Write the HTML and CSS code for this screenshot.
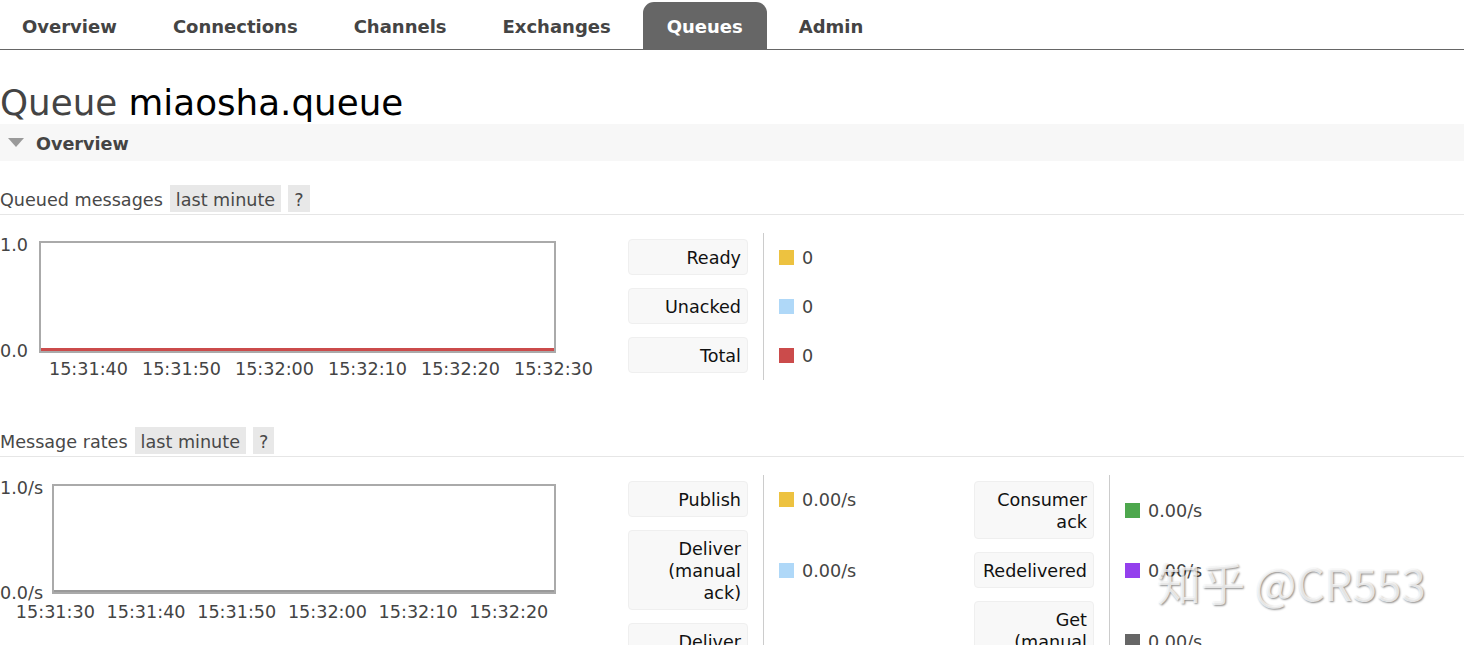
FILE: index.html
```html
<!DOCTYPE html>
<html lang="en">
<head>
<meta charset="utf-8">
<title>RabbitMQ Management - Queue miaosha.queue</title>
<link rel="stylesheet" href="styles.css">
</head>
<body>
<nav class="tabs">
  <a class="tab first">Overview</a>
  <a class="tab">Connections</a>
  <a class="tab">Channels</a>
  <a class="tab">Exchanges</a>
  <a class="tab active">Queues</a>
  <a class="tab">Admin</a>
</nav>

<h1 class="title"><span class="title-kind">Queue</span> <span class="title-name">miaosha.queue</span></h1>

<div class="section-bar">
  <span class="tri"></span>
  <span class="section-name">Overview</span>
</div>

<div class="section">
  <h3 class="sub"><span>Queued messages</span><span class="pill">last minute</span><span class="pill">?</span></h3>
  <div class="chart-row">
    <div class="chart-block">
      <div class="plot-wrap">
        <div class="yaxis y1"><span>1.0</span><span>0.0</span></div>
        <div class="plot p1"><div class="series red"></div></div>
      </div>
      <div class="xaxis x1">
        <span>15:31:40</span><span>15:31:50</span><span>15:32:00</span><span>15:32:10</span><span>15:32:20</span><span>15:32:30</span>
      </div>
    </div>
    <div class="stats first-stats">
      <div class="lbl"><div class="box">Ready</div></div>
      <div class="val"><i class="sw c-yellow"></i>0</div>
      <div class="lbl"><div class="box">Unacked</div></div>
      <div class="val"><i class="sw c-blue"></i>0</div>
      <div class="lbl"><div class="box">Total</div></div>
      <div class="val"><i class="sw c-red"></i>0</div>
    </div>
  </div>

  <h3 class="sub rates"><span>Message rates</span><span class="pill">last minute</span><span class="pill">?</span></h3>
  <div class="chart-row rates-row">
    <div class="chart-block">
      <div class="plot-wrap pw2">
        <div class="yaxis y2"><span>1.0/s</span><span>0.0/s</span></div>
        <div class="plot p2"><div class="series gray"></div></div>
      </div>
      <div class="xaxis x2">
        <span>15:31:30</span><span>15:31:40</span><span>15:31:50</span><span>15:32:00</span><span>15:32:10</span><span>15:32:20</span>
      </div>
    </div>
    <div class="stats first-stats">
      <div class="lbl"><div class="box">Publish</div></div>
      <div class="val"><i class="sw c-yellow"></i>0.00/s</div>
      <div class="lbl"><div class="box">Deliver (manual ack)</div></div>
      <div class="val"><i class="sw c-blue"></i>0.00/s</div>
      <div class="lbl"><div class="box">Deliver (auto ack)</div></div>
      <div class="val"><i class="sw c-red"></i>0.00/s</div>
    </div>
    <div class="stats">
      <div class="lbl"><div class="box">Consumer ack</div></div>
      <div class="val"><i class="sw c-green"></i>0.00/s</div>
      <div class="lbl"><div class="box">Redelivered</div></div>
      <div class="val"><i class="sw c-purple"></i>0.00/s</div>
      <div class="lbl"><div class="box">Get (manual ack)</div></div>
      <div class="val"><i class="sw c-dark"></i>0.00/s</div>
      <div class="lbl"><div class="box">Get (auto ack)</div></div>
      <div class="val"><i class="sw c-olive"></i>0.00/s</div>
    </div>
  </div>
</div>

<div class="watermark">知乎 @CR553</div>
</body>
</html>
```

FILE: styles.css
```css
html, body {
  margin: 0;
  padding: 0;
  background: #fff;
}
body {
  font-family: "DejaVu Sans", Verdana, sans-serif;
  font-size: 17.6px;
  color: #484848;
  overflow: hidden;
  position: relative;
  min-height: 645px;
}

/* nav */
.tabs {
  display: flex;
  align-items: flex-end;
  height: 49px;
  border-bottom: 1px solid #666;
}
.tab {
  display: block;
  height: 47px;
  line-height: 49px;
  padding: 0 24px;
  margin-right: 8px;
  font-weight: bold;
  font-size: 18px;
  color: #444;
  border-radius: 11px 11px 0 0;
}
.tab.first { margin-left: -2px; }
.tab.active {
  background: #666;
  color: #fff;
}

/* title */
.title {
  margin: 0;
  padding-top: 32px;
  font-size: 35.7px;
  line-height: 42px;
  font-weight: normal;
}
.title-kind { color: #444; }
.title-name { color: #000; }

.section-bar {
  height: 37px;
  background: #f7f7f7;
  display: flex;
  align-items: center;
}
.tri {
  width: 0;
  height: 0;
  margin-left: 8px;
  border-left: 8px solid transparent;
  border-right: 8px solid transparent;
  border-top: 9px solid #9a9a9a;
}
.section-name {
  margin-left: 12px;
  font-weight: bold;
  color: #444;
  padding-top: 2px;
}

.section { padding-top: 24px; }

.sub {
  margin: 0;
  font-size: 17.6px;
  font-weight: normal;
  height: 29px;
  display: flex;
  align-items: flex-start;
  border-bottom: 1px solid #e6e6e6;
  line-height: 30px;
  color: #484848;
}
.pill {
  background: #e8e8e8;
  padding: 0 6px;
  margin-left: 7px;
  height: 27px;
}
.sub.rates { margin-top: 47px; }

.chart-row {
  display: flex;
  align-items: flex-start;
  margin-top: 18px;
}
.chart-row.rates-row { margin-top: 18px; }
.chart-block {
  width: 628px;
  flex: none;
}
.plot-wrap {
  display: flex;
  align-items: flex-start;
  margin-top: 8px;
}
.plot-wrap.pw2 { margin-top: 9px; }
.yaxis {
  display: flex;
  flex-direction: column;
  justify-content: space-between;
  line-height: 14px;
  margin-top: -3px;
  color: #444;
}
.y1 { width: 39px; height: 120px; }
.y2 { width: 52px; height: 119px; }
.plot {
  box-sizing: border-box;
  border: 2px solid #aaa;
  background: #fff;
  display: flex;
  align-items: flex-end;
}
.p1 { width: 517px; height: 112px; }
.p2 { width: 504px; height: 110px; }
.series { width: 100%; height: 3px; }
.series.red { background: #cb4b4b; }
.series.gray { background: #9a9a9a; height: 2px; }

.xaxis {
  display: flex;
  line-height: 22px;
  color: #444;
  white-space: nowrap;
}
.xaxis span { text-align: center; flex: none; }
.x1 { margin-top: 0; margin-left: 42px; }
.x1 span { width: 93px; }
.x2 { margin-top: 1px; margin-left: 10px; }
.x2 span { width: 90.7px; }

/* stats tables */
.stats {
  display: grid;
  grid-template-columns: 135px 195px;
  flex: none;
}
.first-stats { grid-template-columns: 135px 211px; }
.lbl {
  padding: 6px 15px 7px 0;
}
.box {
  box-sizing: border-box;
  width: 120px;
  background: #f8f8f8;
  border: 1px solid #efefef;
  border-radius: 4px;
  padding: 7px 6px 5px 4px;
  line-height: 22px;
  text-align: right;
  color: #111;
}
.val {
  border-left: 1px solid #ccc;
  padding-left: 15px;
  display: flex;
  align-items: center;
  color: #444;
}
.sw {
  display: inline-block;
  width: 15px;
  height: 15px;
  margin-right: 8px;
}
.c-yellow { background: #edc240; }
.c-blue { background: #afd8f8; }
.c-red { background: #cb4b4b; }
.c-green { background: #4da74d; }
.c-purple { background: #9440ed; }
.c-dark { background: #666; }
.c-olive { background: #a0a040; }

.watermark {
  position: absolute;
  left: 1157px;
  top: 554px;
  font-family: "Noto Sans CJK SC", "Noto Sans", sans-serif;
  font-size: 44px;
  line-height: 56px;
  color: rgba(255, 255, 255, 0.75);
  text-shadow: 1px 1px 2px rgba(0, 0, 0, 0.45);
  white-space: nowrap;
}
```
